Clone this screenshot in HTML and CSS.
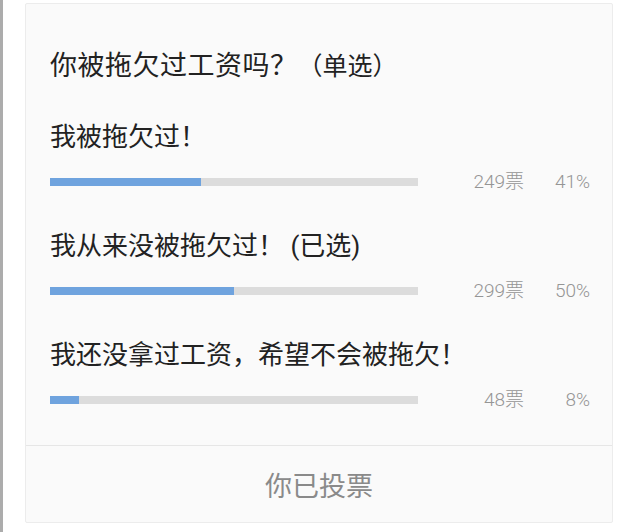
FILE: index.html
```html
<!DOCTYPE html>
<html lang="zh">
<head>
<meta charset="utf-8">
<link rel="stylesheet" href="styles.css">
</head>
<body>
<div class="page">
  <div class="card">
    <div class="content">
      <div class="title">你被拖欠过工资吗？<span class="hint">（单选）</span></div>
      <div class="option">
        <div class="label">我被拖欠过！</div>
        <div class="row">
          <div class="bar"><div class="fill" style="width:41%"></div></div>
          <div class="count">249票</div>
          <div class="pct">41%</div>
        </div>
      </div>
      <div class="option">
        <div class="label">我从来没被拖欠过！ (已选)</div>
        <div class="row">
          <div class="bar"><div class="fill" style="width:50%"></div></div>
          <div class="count">299票</div>
          <div class="pct">50%</div>
        </div>
      </div>
      <div class="option">
        <div class="label">我还没拿过工资，希望不会被拖欠！</div>
        <div class="row">
          <div class="bar"><div class="fill" style="width:8%"></div></div>
          <div class="count">48票</div>
          <div class="pct">8%</div>
        </div>
      </div>
    </div>
    <div class="footer">你已投票</div>
  </div>
</div>
</body>
</html>
```
FILE: styles.css
```css
html, body {
  margin: 0;
  padding: 0;
  background: #ffffff;
}
body {
  font-family: "Roboto", "Noto Sans CJK SC", sans-serif;
}
.page {
  width: 640px;
  height: 532px;
  box-sizing: border-box;
  border-left: 3px solid #acacac;
  padding: 3px 0 0 22px;
}
.card {
  width: 588px;
  height: 520px;
  box-sizing: border-box;
  border: 1px solid #ececec;
  border-radius: 2px;
  background: #fafafa;
  display: flex;
  flex-direction: column;
}
.content {
  height: 442px;
  box-sizing: border-box;
  padding: 44px 0 0 24px;
  border-bottom: 1px solid #e6e6e6;
}
.title {
  font-size: 27px;
  letter-spacing: 0.5px;
  line-height: 36px;
  color: #222;
}
.hint {
  font-size: 25px;
  letter-spacing: 0;
}
.option {
  margin-top: 34px;
}
.option + .option {
  margin-top: 34px;
}
.label {
  font-size: 26px;
  line-height: 36px;
  color: #222;
}
.row {
  margin-top: 15px;
  height: 24px;
  display: grid;
  grid-template-columns: 368px 106px 66px;
  align-items: center;
}
.bar {
  height: 8px;
  background: #dcdcdc;
}
.fill {
  height: 100%;
  background: #6fa3de;
}
.count, .pct {
  text-align: right;
  font-size: 19px;
  font-weight: 300;
  color: #959595;
  line-height: 24px;
}
.footer {
  flex: 1;
  display: flex;
  align-items: center;
  justify-content: center;
  font-size: 27px;
  color: #8a8a8a;
}
```
